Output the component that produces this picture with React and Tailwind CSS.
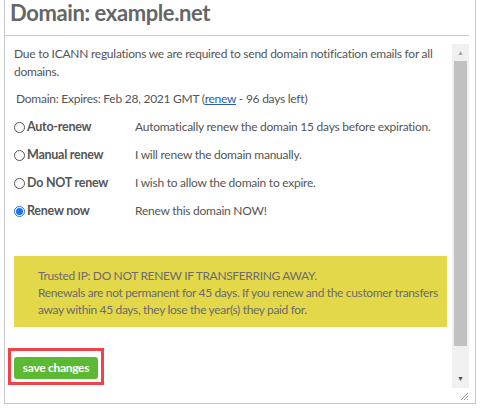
import React from "react";

const options = [
  { id: "auto", label: "Auto-renew", text: "Automatically renew the domain 15 days before expiration." },
  { id: "manual", label: "Manual renew", text: "I will renew the domain manually." },
  { id: "none", label: "Do NOT renew", text: "I wish to allow the domain to expire." },
  { id: "now", label: "Renew now", text: "Renew this domain NOW!" },
];

function Radio({ checked }) {
  if (checked) {
    return (
      <span className="flex h-[11px] w-[11px] shrink-0 items-center justify-center rounded-full border border-[#1a73e8] bg-white">
        <span className="h-[7px] w-[7px] rounded-full bg-[#1a73e8]" />
      </span>
    );
  }
  return <span className="h-[11px] w-[11px] shrink-0 rounded-full border border-[#555] bg-white" />;
}

export default function App() {
  return (
    <div className="h-[410px] bg-white" style={{ fontFamily: "Lato, 'Open Sans', sans-serif" }}>
      <div className="ml-[4px] flex h-[404px] w-[472px] flex-col border-x border-b border-[#c8c8c8]">
        <div className="mr-[6px] h-[36px] border-b border-[#c5ccd6] pl-[5px]">
          <h1 className="text-[22px] font-bold leading-[26px] tracking-[-0.4px] text-[#666]">Domain: example.net</h1>
        </div>
        <div className="flex flex-1">
          <div className="flex-1 pl-[9px] pr-[5px] pt-[9px] text-[12px] tracking-[-0.25px] text-[#555]">
            <p className="leading-[18px]">
              Due to ICANN regulations we are required to send domain notification emails for all domains.
            </p>
            <p className="mt-[9px] pl-[2px] leading-[18px]">
              Domain: Expires: Feb 28, 2021 GMT (<a href="#" className="text-[#2a5db0] underline">renew</a> - 96 days left)
            </p>
            <div className="mt-[10px] flex flex-col gap-[10px]">
              {options.map((o) => (
                <div key={o.id} className="flex h-[18px] items-center whitespace-nowrap">
                  <Radio checked={o.id === "now"} />
                  <span className="ml-[2px] w-[108px] text-[12.5px] font-bold text-[#555]">{o.label}</span>
                  <span>{o.text}</span>
                </div>
              ))}
            </div>
            <div className="mt-[36px] h-[71px] bg-[#e2d84a] pl-[24px] pr-[2px] pt-[11px] leading-[17px] tracking-[-0.35px] text-[#6e6a6e]">
              <p>Trusted IP: DO NOT RENEW IF TRANSFERRING AWAY.</p>
              <p>Renewals are not permanent for 45 days. If you renew and the customer transfers away within 45 days, they lose the year(s) they paid for.</p>
            </div>
            <div className="ml-[-6px] mt-[21px] w-[96px] border-[3px] border-[#f0424a] p-[3px] pt-[6px]">
              <button className="h-[22px] w-[84px] rounded-[3px] bg-[#5cb934] text-[12px] font-bold tracking-[-0.3px] text-white">
                save changes
              </button>
            </div>
          </div>
          <div className="flex w-[23px] flex-col pr-[6px]">
            <div className="mt-[8px] flex h-[344px] flex-col bg-[#f0f0f0]">
              <div className="flex h-[17px] items-center justify-center text-[7px] text-[#a3a3a3]">▲</div>
              <div className="mx-[2px] h-[285px] bg-[#c1c1c1]" />
              <div className="flex flex-1 items-end justify-center pb-[5px] text-[7px] text-[#505050]">▼</div>
            </div>
            <svg className="ml-[8px] mt-[4px]" width="9" height="9" viewBox="0 0 9 9">
              <path d="M8 1 L1 8 M8 4 L4 8 M8 7 L7 8" stroke="#9a9a9a" strokeWidth="1" />
            </svg>
          </div>
        </div>
      </div>
    </div>
  );
}
